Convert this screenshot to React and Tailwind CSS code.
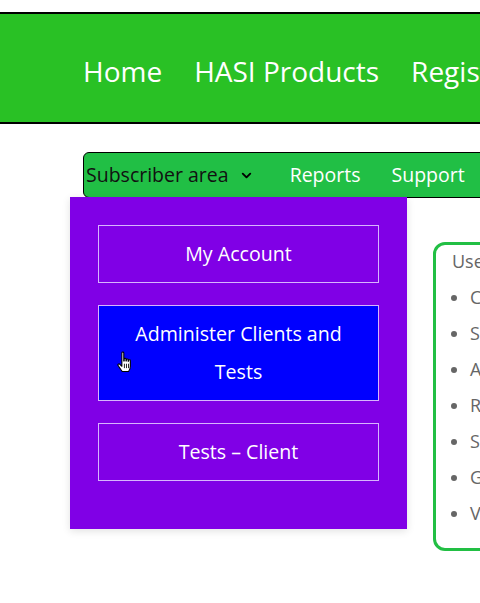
import { ChevronDown } from "lucide-react";

const font = { fontFamily: '"Open Sans", "Noto Sans", sans-serif' };

const menuItems = ["My Account", "Administer Clients and Tests", "Tests – Client"];
const cardItems = ["Clients", "Subscriptions", "Assessments", "Reports", "Support", "Guides", "Videos"];

function HandCursor() {
  return (
    <svg className="absolute left-[117px] top-[351px] w-[17px] h-[25px]" viewBox="0 0 14 20">
      <path
        d="M4 1.3c0-1 1.6-1 1.6 0V8h.3V6.4c0-1 1.5-1 1.5 0V8h.3V7c0-1 1.5-1 1.5 0v1.2h.3v-.6c0-1 1.5-1 1.5 0v4.6c0 2-.7 3.2-1.5 4.4H4.3C3.5 15.4 1.8 13.2.9 11.7c-.6-1 .6-1.9 1.5-1L4 12.3z"
        fill="#fff"
        stroke="#000"
        strokeWidth="0.9"
        strokeLinejoin="round"
      />
      <path d="M6.1 10.2v3.6M7.8 10.2v3.6M9.5 10.2v3.6" stroke="#000" strokeWidth="0.7" />
    </svg>
  );
}

export default function App() {
  return (
    <div className="relative w-[480px] h-[603px] overflow-hidden bg-white" style={font}>
      {/* top nav */}
      <div className="mt-[12px] h-[112px] w-[520px] border-y-2 border-black bg-[#29c125] flex items-center pl-[83px] pt-[6px] gap-[32px] text-[28px] text-white whitespace-nowrap">
        <span>Home</span>
        <span>HASI Products</span>
        <span>Register</span>
      </div>

      {/* sub nav */}
      <div className="mt-[28px] ml-[83px] h-[46px] w-[440px] rounded-md border-[1.5px] border-black bg-[#21bf45] flex items-center pl-[2px] text-[19.5px] whitespace-nowrap">
        <span className="text-[#111]">Subscriber area</span>
        <ChevronDown className="ml-[10px] w-[15px] h-[15px] text-black" strokeWidth={3} />
        <span className="ml-[36px] text-white">Reports</span>
        <span className="ml-[31px] text-white">Support</span>
      </div>

      {/* content card */}
      <div className="mt-[44px] ml-[433px] h-[309px] w-[200px] rounded-xl border-[3px] border-[#22bf44] pl-[16px] pt-[1px] text-[18px] text-[#666] whitespace-nowrap">
        <div className="leading-[30px]">Users of the subscriber area can:</div>
        <ul className="mt-[3px] list-disc pl-[18px] marker:text-[#666]">
          {cardItems.map((item) => (
            <li key={item} className="leading-[36px]">
              {item}
            </li>
          ))}
        </ul>
      </div>

      {/* dropdown menu */}
      <div className="absolute left-[70px] top-[197px] w-[337px] h-[332px] bg-[#8000e6] shadow-[0_2px_8px_rgba(0,0,0,0.12)] px-[28px] pt-[28px] flex flex-col gap-[22px]">
        {menuItems.map((item, i) => (
          <div
            key={item}
            className={`border border-[#d8b4fe] text-white text-[19.6px] leading-[38px] text-center py-[9px] px-[20px] ${
              i === 1 ? "bg-[#0000ff]" : ""
            }`}
          >
            {item}
          </div>
        ))}
      </div>

      <HandCursor />
    </div>
  );
}
